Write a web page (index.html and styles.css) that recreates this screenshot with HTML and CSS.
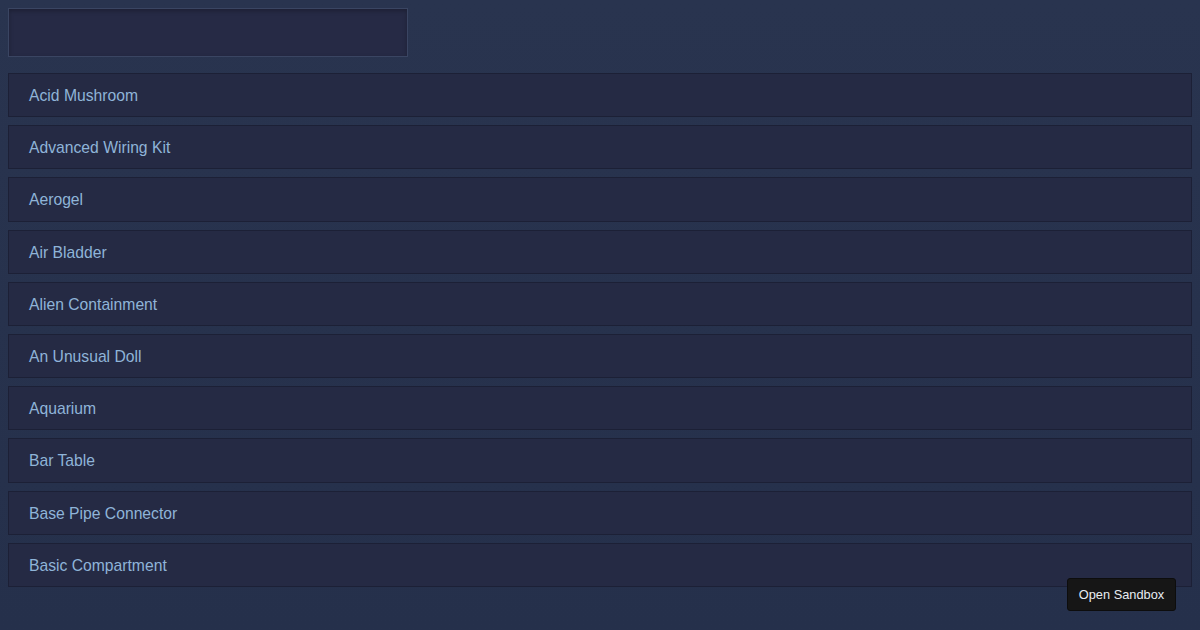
FILE: index.html
```html
<!DOCTYPE html>
<html>
<head>
<meta charset="utf-8">
<link rel="stylesheet" href="styles.css">
</head>
<body>
<div class="page">
  <input class="search" type="text">
  <ul class="list">
    <li class="item">Acid Mushroom</li>
    <li class="item">Advanced Wiring Kit</li>
    <li class="item">Aerogel</li>
    <li class="item">Air Bladder</li>
    <li class="item">Alien Containment</li>
    <li class="item">An Unusual Doll</li>
    <li class="item">Aquarium</li>
    <li class="item">Bar Table</li>
    <li class="item">Base Pipe Connector</li>
    <li class="item">Basic Compartment</li>
  </ul>
</div>
<div class="tooltip">Open Sandbox</div>
</body>
</html>
```
FILE: styles.css
```css
html, body {
  margin: 0;
  height: 100%;
}
body {
  background: linear-gradient(#29344f, #25304b);
  font-family: "Liberation Sans", Arial, sans-serif;
  overflow: hidden;
}
.page {
  padding: 8px;
}
.search {
  display: block;
  box-sizing: border-box;
  width: 400px;
  height: 49px;
  margin: 0 0 16px 0;
  background: #262a45;
  border: 1px solid #3a4562;
  box-shadow: inset 0 2px 4px rgba(0, 0, 0, 0.25);
  outline: none;
}
.list {
  list-style: none;
  margin: 0;
  padding: 0;
  display: flex;
  flex-direction: column;
  gap: 8px;
}
.item {
  background: #252a44;
  border: 1px solid #1c2036;
  padding: 13px 20px 11px;
  line-height: 18.2px;
  font-size: 15.7px;
  color: #8fb4d8;
}
.tooltip {
  position: absolute;
  left: 1067px;
  top: 578px;
  width: 109px;
  height: 33px;
  box-sizing: border-box;
  background: #161616;
  border: 1px solid #0d0d0d;
  border-radius: 3px;
  color: #e8edf2;
  font-size: 12.8px;
  display: flex;
  align-items: center;
  justify-content: center;
}
```
